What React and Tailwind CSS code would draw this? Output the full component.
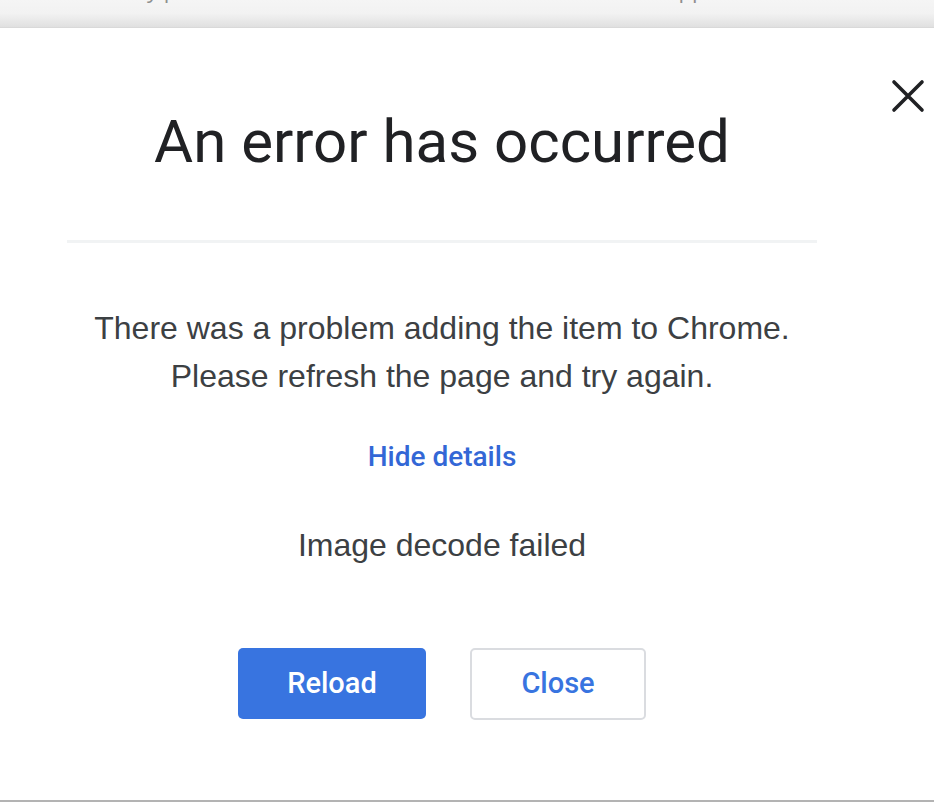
import React from 'react';

const CloseIcon = () => (
  <svg width="34" height="34" viewBox="0 0 34 34" fill="none">
    <path d="M3 3 L31 31 M31 3 L3 31" stroke="#202124" strokeWidth="3.6" strokeLinecap="round" />
  </svg>
);

const App = () => {
  return (
    <div className="w-[934px] h-[802px] bg-white flex flex-col overflow-hidden">
      {/* browser strip at the top, text cut off */}
      <div className="h-[28px] shrink-0 overflow-hidden bg-gradient-to-b from-[#f5f5f5] via-[#f2f2f2] to-[#e0e0e0] border-b border-[#d9d9d9]">
        <div
          className="flex h-[22px] -mt-[22px] leading-[22px] text-[#8f8f8f] text-[22px] whitespace-nowrap"
          style={{ fontFamily: '"Open Sans", sans-serif' }}
        >
          <span className="ml-[112px]">Easy pieces</span>
          <span className="ml-[170px]">Find more</span>
          <span className="ml-[150px]">Support</span>
        </div>
      </div>

      {/* dialog body */}
      <div className="flex-1 flex border-b-2 border-[#b3b3b3]">
        <div className="ml-[67px] w-[750px] flex flex-col items-center">
          <h1
            className="mt-[82px] text-[60px] leading-[64px] text-[#202124] font-normal whitespace-nowrap"
            style={{ fontFamily: 'Roboto, sans-serif' }}
          >
            An error has occurred
          </h1>
          <div className="mt-[66px] w-full h-[3px] bg-[#f1f3f4]" />

          <div
            className="mt-[61px] text-center text-[#3c4043] text-[32px] leading-[48px] whitespace-nowrap"
            style={{ fontFamily: '"Liberation Sans", Arial, sans-serif' }}
          >
            <p>There was a problem adding the item to Chrome.</p>
            <p>Please refresh the page and try again.</p>
          </div>

          <button
            className="mt-[41px] text-[28px] leading-[32px] font-medium text-[#3367d6]"
            style={{ fontFamily: 'Roboto, sans-serif' }}
          >
            Hide details
          </button>

          <p
            className="mt-[52px] text-[32px] leading-[40px] text-[#3c4043]"
            style={{ fontFamily: '"Liberation Sans", Arial, sans-serif' }}
          >
            Image decode failed
          </p>

          <div className="mt-[83px] flex gap-[44px]" style={{ fontFamily: 'Roboto, sans-serif' }}>
            <button className="w-[188px] h-[71px] rounded-[5px] bg-[#3874e0] text-white text-[29px] font-medium">
              Reload
            </button>
            <button className="w-[176px] h-[72px] rounded-[5px] border-2 border-[#dadce0] bg-white text-[#3874e0] text-[29px] font-medium">
              Close
            </button>
          </div>
        </div>

        <div className="ml-auto mr-[9px] mt-[51px]">
          <button className="p-0">
            <CloseIcon />
          </button>
        </div>
      </div>
    </div>
  );
};

export default App;
